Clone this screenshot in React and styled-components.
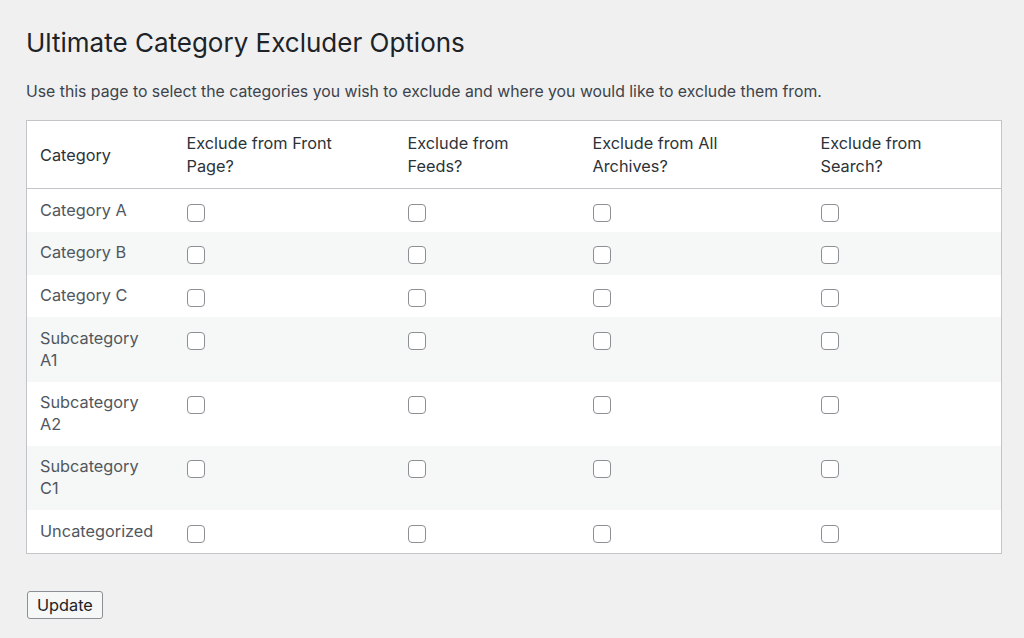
import React from "react";
import styled, { createGlobalStyle } from "styled-components";

const GlobalStyle = createGlobalStyle`
  html, body {
    margin: 0;
    padding: 0;
    background: #f0f0f1;
  }
  body {
    font-family: Inter, "Noto Sans", sans-serif;
    color: #3c434a;
  }
`;

const Page = styled.div`
  padding: 27px 23px 0 26px;
  width: 1024px;
  height: 638px;
  box-sizing: border-box;
  overflow: hidden;
`;

const Title = styled.h1`
  margin: 0;
  font-size: 26px;
  font-weight: 400;
  line-height: 32px;
  color: #1d2327;
`;

const Intro = styled.p`
  margin: 22px 0 17px;
  font-size: 15.8px;
  line-height: 22px;
  color: #3c434a;
`;

const Table = styled.table`
  width: 975px;
  border-collapse: collapse;
  table-layout: fixed;
  background: #fff;
  border: 1px solid #c3c4c7;
`;

const HeadCell = styled.th`
  box-sizing: border-box;
  width: ${(p) => p.$w}px;
  text-align: left;
  font-weight: 400;
  font-size: 16.3px;
  line-height: 23px;
  color: #2c3338;
  padding: 11px 16px 10px 13px;
  vertical-align: middle;
  border-bottom: 1px solid #c3c4c7;
`;

const Row = styled.tr`
  background: ${(p) => (p.$alt ? "#f6f7f7" : "#fff")};
`;

const Cell = styled.td`
  box-sizing: border-box;
  font-size: 16.3px;
  line-height: 21.7px;
  color: #50575e;
  padding: 10.6px 16px 10.2px 13px;
  vertical-align: top;
`;

const Box = styled.span`
  display: block;
  box-sizing: border-box;
  width: 18px;
  height: 18px;
  margin-top: 4px;
  border: 1px solid #8c8f94;
  border-radius: 4px;
  background: #fff;
`;

const Button = styled.button`
  margin-top: 37px;
  margin-left: 1px;
  height: 28px;
  font-family: Inter, "Noto Sans", sans-serif;
  font-size: 16.3px;
  line-height: 20px;
  color: #1d2327;
  padding: 2px 9px;
  background: #f6f7f7;
  border: 1px solid #8c8f94;
  border-radius: 3px;
`;

const columns = [
  { label: "Category", w: 147 },
  { label: "Exclude from Front Page?", w: 221 },
  { label: "Exclude from Feeds?", w: 185 },
  { label: "Exclude from All Archives?", w: 228 },
  { label: "Exclude from Search?", w: 194 },
];

const categories = [
  "Category A",
  "Category B",
  "Category C",
  "Subcategory A1",
  "Subcategory A2",
  "Subcategory C1",
  "Uncategorized",
];

export default function App() {
  return (
    <Page>
      <GlobalStyle />
      <Title>Ultimate Category Excluder Options</Title>
      <Intro>
        Use this page to select the categories you wish to exclude and where you would like to
        exclude them from.
      </Intro>
      <Table>
        <thead>
          <tr>
            {columns.map((c) => (
              <HeadCell key={c.label} $w={c.w}>
                {c.label}
              </HeadCell>
            ))}
          </tr>
        </thead>
        <tbody>
          {categories.map((name, i) => (
            <Row key={name} $alt={i % 2 === 1}>
              <Cell>{name}</Cell>
              {[0, 1, 2, 3].map((k) => (
                <Cell key={k}>
                  <Box />
                </Cell>
              ))}
            </Row>
          ))}
        </tbody>
      </Table>
      <Button>Update</Button>
    </Page>
  );
}
